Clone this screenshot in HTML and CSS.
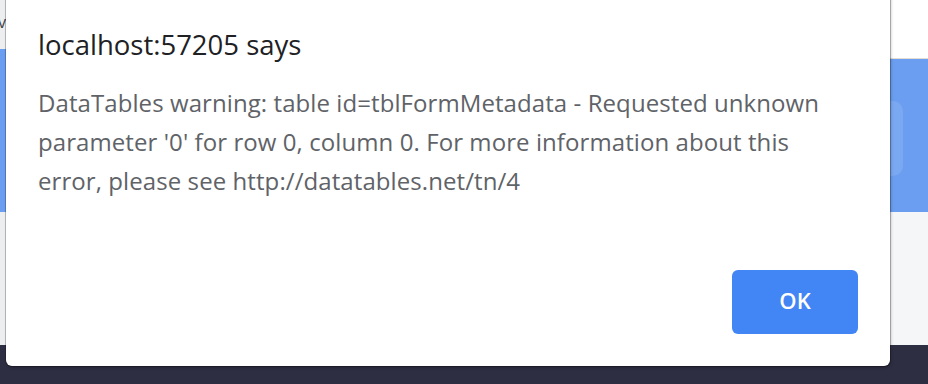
FILE: index.html
```html
<!DOCTYPE html>
<html>
<head>
<meta charset="utf-8">
<link rel="stylesheet" href="styles.css">
</head>
<body>
<div class="page">
  <div class="side">
    <div class="side-top"><span class="side-glyph">v</span></div>
    <div class="side-blue"></div>
    <div class="side-gray"></div>
  </div>
  <div class="main">
    <div class="main-top"></div>
    <div class="main-blue"><div class="blue-card"></div></div>
    <div class="main-gray"></div>
  </div>
</div>
<div class="footer"></div>

<div class="dialog" role="alertdialog">
  <div class="dialog-title">localhost:57205 says</div>
  <div class="dialog-msg">DataTables warning: table id=tblFormMetadata - Requested unknown parameter '0' for row 0, column 0. For more information about this error, please see http://datatables.net/tn/4</div>
  <div class="dialog-actions">
    <button class="ok-btn">OK</button>
  </div>
</div>
</body>
</html>
```

FILE: styles.css
```css
html, body {
  margin: 0;
  padding: 0;
  width: 928px;
  height: 384px;
  overflow: hidden;
  font-family: "Open Sans", "Noto Sans", sans-serif;
}

body {
  position: relative;
  background: #2e2e43;
}

.page {
  display: flex;
  height: 345px;
}

.side {
  width: 6px;
  display: flex;
  flex-direction: column;
  background: #eceef0;
  border-right: 1px solid #b9bcc0;
}

.side-top {
  height: 49px;
  overflow: hidden;
}

.side-glyph {
  font-size: 16px;
  color: #444;
  line-height: 1;
  display: block;
  margin-top: 14px;
  margin-left: -2px;
}

.side-blue {
  height: 163px;
  background: #6b9ef0;
}

.side-gray {
  flex: 1;
  background: #eceef0;
}

.main {
  flex: 1;
  display: flex;
  flex-direction: column;
}

.main-top {
  height: 58px;
  background: #ffffff;
  border-bottom: 1px solid #e3ddd3;
}

.main-blue {
  height: 153px;
  background: #6b9ef0;
  display: flex;
  justify-content: flex-end;
  padding-top: 42px;
  box-sizing: border-box;
}

.blue-card {
  width: 40px;
  height: 75px;
  margin-right: 25px;
  border-radius: 10px;
  background: #7aa8f1;
}

.main-gray {
  flex: 1;
  background: #f5f6f8;
}

.footer {
  height: 39px;
  background: #2e2e43;
}

.dialog {
  position: absolute;
  left: 6px;
  top: -20px;
  width: 884px;
  height: 386px;
  box-sizing: border-box;
  background: #ffffff;
  border-radius: 0 0 6px 6px;
  box-shadow: 0 0 0 1px rgba(0,0,0,0.22), 1px 2px 3px rgba(0,0,0,0.25);
  padding: 47px 32px 0 32px;
  display: flex;
  flex-direction: column;
}

.dialog-title {
  font-size: 27.5px;
  line-height: 36px;
  color: #202124;
}

.dialog-msg {
  margin-top: 20px;
  font-size: 24px;
  line-height: 39px;
  color: #5f6368;
  letter-spacing: 0.08px;
  width: 815px;
}

.dialog-actions {
  display: flex;
  justify-content: flex-end;
  padding-top: 70px;
}

.ok-btn {
  width: 126px;
  height: 64px;
  border: none;
  border-radius: 6px;
  background: #4285f4;
  color: #ffffff;
  font-family: "Open Sans", "Noto Sans", sans-serif;
  font-weight: 600;
  font-size: 22px;
  padding: 0 0 4px 0;
}
```
